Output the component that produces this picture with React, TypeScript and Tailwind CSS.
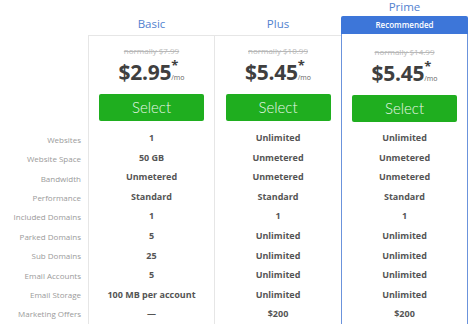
const labels = [
  "Websites",
  "Website Space",
  "Bandwidth",
  "Performance",
  "Included Domains",
  "Parked Domains",
  "Sub Domains",
  "Email Accounts",
  "Email Storage",
  "Marketing Offers",
];

const plans = [
  {
    name: "Basic",
    normally: "$7.99",
    price: "$2.95",
    values: ["1", "50 GB", "Unmetered", "Standard", "1", "5", "25", "5", "100 MB per account", "—"],
  },
  {
    name: "Plus",
    normally: "$10.99",
    price: "$5.45",
    values: ["Unlimited", "Unmetered", "Unmetered", "Standard", "1", "Unlimited", "Unlimited", "Unlimited", "Unlimited", "$200"],
  },
];

const prime = {
  name: "Prime",
  normally: "$14.99",
  price: "$5.45",
  values: ["Unlimited", "Unmetered", "Unmetered", "Standard", "1", "Unlimited", "Unlimited", "Unlimited", "Unlimited", "$200"],
};

const font = { fontFamily: '"Open Sans", "Liberation Sans", sans-serif' };

function PriceBlock({ normally, price }: { normally: string; price: string }) {
  return (
    <div className="flex flex-col items-center">
      <div className="text-[8px] leading-[12px] text-[#b8b8b8] line-through">normally {normally}</div>
      <div className="mt-[2px] flex items-start text-[#3f3f3f]">
        <span className="text-[21px] font-bold leading-[26px] tracking-[-0.3px]">{price}</span>
        <span className="flex flex-col">
          <span className="h-[11px] text-[13px] font-bold leading-[13px]">*</span>
          <span className="mt-[4px] text-[7px] leading-[8px] text-[#666]">/mo</span>
        </span>
      </div>
      <button
        className="mt-[9px] h-[27px] w-[105px] rounded-[2px] bg-[#1fae1f] text-[15px] font-light text-[#e9f7e9]"
        style={{ fontFamily: 'Lato, "Open Sans", sans-serif' }}
      >
        Select
      </button>
    </div>
  );
}

function Rows({ values, offset }: { values: string[]; offset: string }) {
  return (
    <div className={`flex flex-col ${offset}`}>
      {values.map((v, i) => (
        <div
          key={i}
          className="flex h-[19.6px] items-center justify-center text-[9px] font-bold text-[#555]"
        >
          {v}
        </div>
      ))}
    </div>
  );
}

export default function App() {
  return (
    <div className="flex h-[324px] w-[474px] overflow-hidden bg-white" style={font}>
      {/* feature labels */}
      <div className="flex w-[88px] flex-col pr-[7px] pt-[130px]">
        {labels.map((l) => (
          <div
            key={l}
            className="flex h-[19.6px] items-center justify-end whitespace-nowrap text-[8px] text-[#9a9a9a]"
          >
            {l}
          </div>
        ))}
      </div>

      {plans.map((p, i) => (
        <div key={p.name} className={`flex flex-col ${i === 0 ? "w-[127px]" : "w-[126px]"}`}>
          <div className="flex h-[36px] items-end justify-center pb-[3px] text-[11.5px] leading-[16px] text-[#5282cf]">
            {p.name}
          </div>
          <div
            className={`flex-1 border-t border-[#e6e6e6] pt-[9px] ${
              i === 0 ? "border-l border-r" : ""
            }`}
          >
            <PriceBlock normally={p.normally} price={p.price} />
            <Rows values={p.values} offset="mt-[7px]" />
          </div>
        </div>
      ))}

      {/* recommended plan */}
      <div className="flex w-[127px] flex-col">
        <div className="flex h-[16px] items-start justify-center text-[11.5px] leading-[13px] text-[#5282cf]">
          {prime.name}
        </div>
        <div className="flex h-[18px] items-center justify-center rounded-t-[2px] bg-[#3d76d9] text-[8px] font-semibold text-white">
          Recommended
        </div>
        <div className="flex-1 border-x border-[#6b93dc] pt-[12px]">
          <PriceBlock normally={prime.normally} price={prime.price} />
          <Rows values={prime.values} offset="mt-[6px]" />
        </div>
      </div>
    </div>
  );
}
